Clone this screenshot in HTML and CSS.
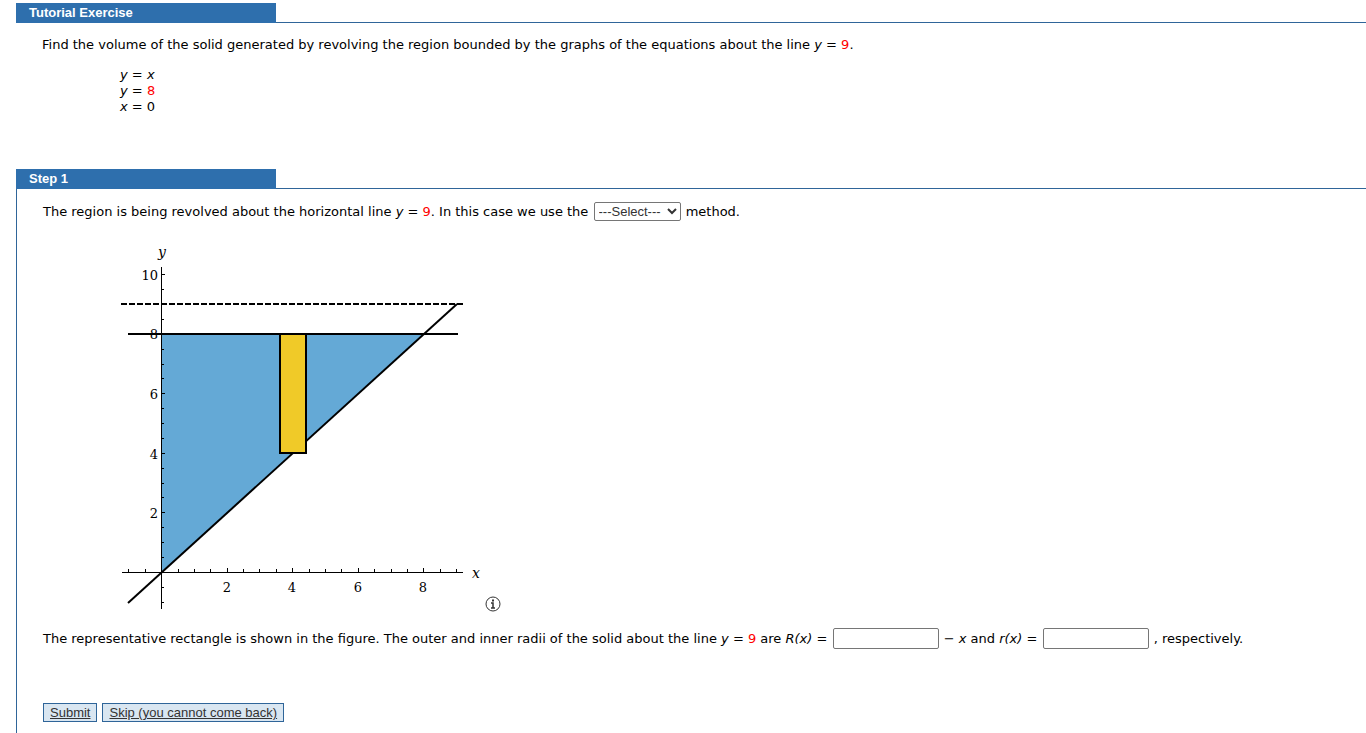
FILE: index.html
```
<!DOCTYPE html>
<html lang="en">
<head>
    <meta charset="UTF-8">
    <meta name="viewport" content="width=device-width, initial-scale=1.0">
    <title>Tutorial Exercise</title>
    <link rel="stylesheet" href="styles.css">
</head>
<body>
    <section class="exercise">
        <div class="bar"><h2>Tutorial Exercise</h2></div>
        <div class="question">
            <p>Find the volume of the solid generated by revolving the region bounded by the graphs of the equations about the line <i>y</i> = <span class="red">9</span>.</p>
            <div class="equations">
                <div><i>y</i> = <i>x</i></div>
                <div><i>y</i> = <span class="red">8</span></div>
                <div><i>x</i> = 0</div>
            </div>
        </div>
    </section>

    <section class="step">
        <div class="bar"><h2>Step 1</h2></div>
        <form class="step-body">
            <p class="line">The region is being revolved about the horizontal line <i>y</i> = <span class="red">9</span>. In this case we use the
                <select name="method" aria-label="method">
                    <option>---Select---</option>
                    <option>disk</option>
                    <option>washer</option>
                    <option>shell</option>
                </select> method.</p>

            <div class="figure">
                <svg class="graph" width="364" height="372" viewBox="0 0 364 372" role="img" aria-label="Graph of the region">
                    <!-- region and rectangle -->
                    <path class="region" d="M42 94H304L42 332Z"/>
                    <path class="curve" d="M8 363L337 64"/>
                    <path class="curve" d="M8 94H338"/>
                    <rect class="strip" x="160" y="94" width="26" height="119"/>
                    <path class="curve dashed" d="M1 64H343"/>
                    <!-- axes -->
                    <path class="axis" d="M2 332.5H343M41.5 27V369"/>
                    <path class="axis" d="M8.500 332v-3M25.500 332v-3M58.500 332v-3M74.500 332v-3M90.500 332v-3M107.500 332v-4M123.500 332v-3M139.500 332v-3M156.500 332v-3M172.500 332v-4M189.500 332v-3M205.500 332v-3M221.500 332v-3M238.500 332v-4M254.500 332v-3M271.500 332v-3M287.500 332v-3M303.500 332v-4M320.500 332v-3M336.500 332v-3"/>
                    <path class="axis" d="M42 362.500h2M42 347.500h2M42 317.500h2M42 302.500h2M42 287.500h2M42 272.500h3M42 257.500h2M42 243.500h2M42 228.500h2M42 213.500h3M42 198.500h2M42 183.500h2M42 168.500h2M42 153.500h3M42 138.500h2M42 124.500h2M42 109.500h2M42 79.500h2M42 49.500h2M42 34.500h3"/>
                    <!-- labels -->
                    <g class="y-label">
                        <text x="38" y="40">10</text>
                        <text x="38" y="99">8</text>
                        <text x="38" y="159">6</text>
                        <text x="38" y="219">4</text>
                        <text x="38" y="278">2</text>
                    </g>
                    <g class="x-label">
                        <text x="107" y="352">2</text>
                        <text x="172" y="352">4</text>
                        <text x="238" y="352">6</text>
                        <text x="303" y="352">8</text>
                    </g>
                    <text class="name" x="42" y="17">y</text>
                    <text class="name" x="356" y="338">x</text>
                </svg>
                <svg class="info" width="16" height="16" viewBox="0 0 16 16" role="img" aria-label="Info">
                    <circle cx="8" cy="8" r="7"/>
                    <path class="info-dot" d="M7 3.500h2v2h-2z"/>
                    <path class="info-stem" d="M6 7h2v5M6 12h4"/>
                </svg>
            </div>

            <p class="line">The representative rectangle is shown in the figure. The outer and inner radii of the solid about the line <i>y</i> = <span class="red">9</span> are <i>R(x)</i> =
                <input type="text" name="outer" aria-label="R(x)"> − <i>x</i> and <i>r(x)</i> =
                <input type="text" name="inner" aria-label="r(x)"> , respectively.</p>

            <div class="buttons">
                <button type="submit">Submit</button>
                <button type="button">Skip (you cannot come back)</button>
            </div>
        </form>
    </section>
</body>
</html>
```
FILE: styles.css
```
* {
    box-sizing: border-box;
}
body {
    margin: 0;
    padding: 3px 0 0 16px;
    min-height: 100vh;
    display: flex;
    flex-direction: column;
    background: white;
    color: black;
    font-family: Verdana, "DejaVu Sans", sans-serif;
    font-size: 13px;
    line-height: 16px;
}
p {
    margin: 0;
}
.bar {
    border-bottom: 1px solid #2f6599;
}
.bar h2 {
    width: 260px;
    height: 20px;
    margin: 0 0 -1px;
    padding: 0 13px;
    background: #2e6fad;
    color: white;
    font-family: Arial, "Liberation Sans", sans-serif;
    font-size: 13px;
    line-height: 19px;
}
.red {
    color: #f00;
}
.question {
    padding: 14px 26px 54px;
}
.equations {
    padding: 14px 0 0 78px;
}
.step {
    flex: 1;
    display: flex;
    flex-direction: column;
}
.step-body {
    flex: 1;
    padding: 12px 26px 10px;
    border-left: 1px solid #2f6599;
}
.line {
    line-height: 22px;
}
select {
    width: 87px;
    height: 19px;
    margin: 0 1px;
    padding: 0;
    border: 1px solid #767676;
    border-radius: 2px;
    background: white;
    color: #333;
    font-family: Arial, "Liberation Sans", sans-serif;
    font-size: 13px;
}
input {
    width: 106px;
    height: 21px;
    margin: 0 1px;
    border: 1px solid #767676;
    border-radius: 2px;
    font-size: 13px;
}
.figure {
    display: flex;
    align-items: flex-end;
    padding: 17px 0 16px 77px;
}
.info {
    margin-left: 1px;
}
.info circle {
    fill: white;
    stroke: #333;
    stroke-width: 1;
}
.info-dot {
    fill: #333;
}
.info-stem {
    fill: none;
    stroke: #333;
    stroke-width: 1.5;
}
.region {
    fill: #64a9d6;
}
.strip {
    fill: #f0ca28;
    stroke: black;
    stroke-width: 2;
}
.curve {
    fill: none;
    stroke: black;
    stroke-width: 2;
}
.dashed {
    stroke-dasharray: 6 2;
}
.axis {
    fill: none;
    stroke: black;
    stroke-width: 1;
}
.graph text {
    font-family: "DejaVu Serif", serif;
    font-size: 13px;
}
.y-label {
    text-anchor: end;
}
.x-label,
.name {
    text-anchor: middle;
}
.graph .name {
    font-size: 14px;
    font-style: italic;
}
.buttons {
    display: flex;
    gap: 5px;
    padding-top: 53px;
}
button {
    height: 19px;
    padding: 0 6px;
    border: 1px solid #2f6599;
    background: #d9e6f1;
    color: #333;
    font-family: Arial, "Liberation Sans", sans-serif;
    font-size: 13px;
    line-height: 17px;
    text-decoration: underline;
    cursor: pointer;
}
```
